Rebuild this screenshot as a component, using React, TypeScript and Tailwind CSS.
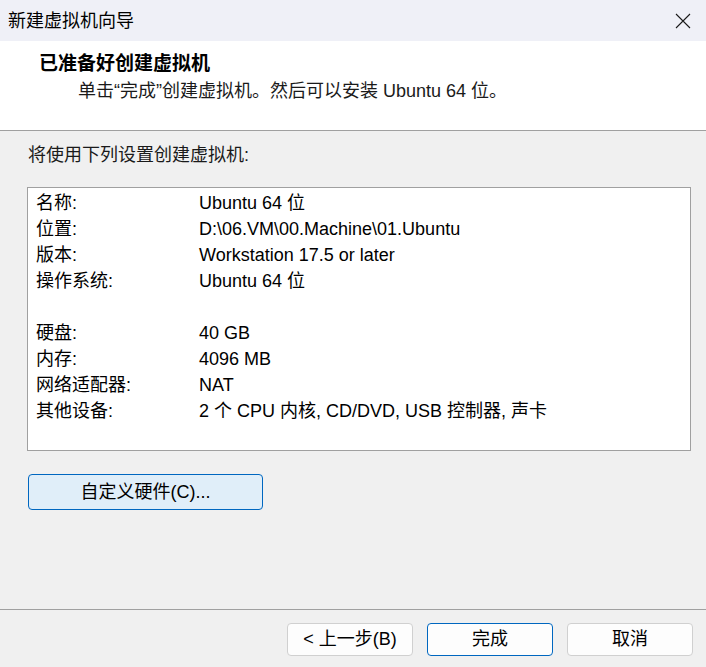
const FONT = { fontFamily: '"Liberation Sans", "Noto Sans CJK SC", sans-serif' };

const ROWS: [string, string][] = [
  ['名称:', 'Ubuntu 64 位'],
  ['位置:', 'D:\\06.VM\\00.Machine\\01.Ubuntu'],
  ['版本:', 'Workstation 17.5 or later'],
  ['操作系统:', 'Ubuntu 64 位'],
  ['', ''],
  ['硬盘:', '40 GB'],
  ['内存:', '4096 MB'],
  ['网络适配器:', 'NAT'],
  ['其他设备:', '2 个 CPU 内核, CD/DVD, USB 控制器, 声卡'],
];

export default function App() {
  return (
    <div className="flex h-[667px] w-[706px] flex-col bg-[#f0f0f0] text-[#1a1a1a]" style={FONT}>
      {/* title bar */}
      <div className="flex h-[41px] items-center justify-between bg-[#eff0f7] pl-[8px] pr-[15px]">
        <span className="text-[18px] leading-[24px] text-black">新建虚拟机向导</span>
        <svg viewBox="0 0 16 16" className="h-[16px] w-[16px]" fill="none" stroke="#1a1a1a" strokeWidth={1.1}>
          <path d="M1 1l14 14M15 1L1 15" />
        </svg>
      </div>

      {/* header */}
      <div className="flex h-[89px] flex-col bg-white pl-[39px] pt-[9px]">
        <div className="text-[19px] font-bold leading-[28px] text-black">已准备好创建虚拟机</div>
        <div className="ml-[39px] text-[18px] leading-[26px]">
          单击“完成”创建虚拟机。然后可以安装 Ubuntu 64 位。
        </div>
      </div>
      <div className="h-px bg-[#a0a0a0]" />

      {/* body */}
      <div className="flex flex-1 flex-col px-[27px] pt-[12px]">
        <div className="pl-px text-[18px] leading-[24px]">将使用下列设置创建虚拟机:</div>
        <div className="mt-[20px] h-[264px] w-[664px] border border-[#a0a0a0] bg-white pl-[8px] pt-[2px]">
          {ROWS.map(([k, v], i) => (
            <div key={i} className="flex h-[26px] items-center text-[18px] text-black">
              <span className="w-[163px] shrink-0">{k}</span>
              <span>{v}</span>
            </div>
          ))}
        </div>
        <button className="ml-px mt-[23px] h-[36px] w-[235px] rounded-[4px] border border-[#0067c0] bg-[#e0eef9] text-[18px] text-black">
          自定义硬件(C)...
        </button>
      </div>

      {/* footer */}
      <div className="h-px bg-[#a0a0a0]" />
      <div className="flex h-[57px] justify-end gap-[14px] pr-[13px] pt-[13px]">
        <button className="h-[33px] w-[126px] rounded-[4px] border border-[#d0d0d0] bg-[#fdfdfd] text-[18px] text-black">
          &lt; 上一步(B)
        </button>
        <button className="h-[33px] w-[126px] rounded-[4px] border border-[#0067c0] bg-[#fdfdfd] text-[18px] text-black">
          完成
        </button>
        <button className="h-[33px] w-[126px] rounded-[4px] border border-[#d0d0d0] bg-[#fdfdfd] text-[18px] text-black">
          取消
        </button>
      </div>
    </div>
  );
}
